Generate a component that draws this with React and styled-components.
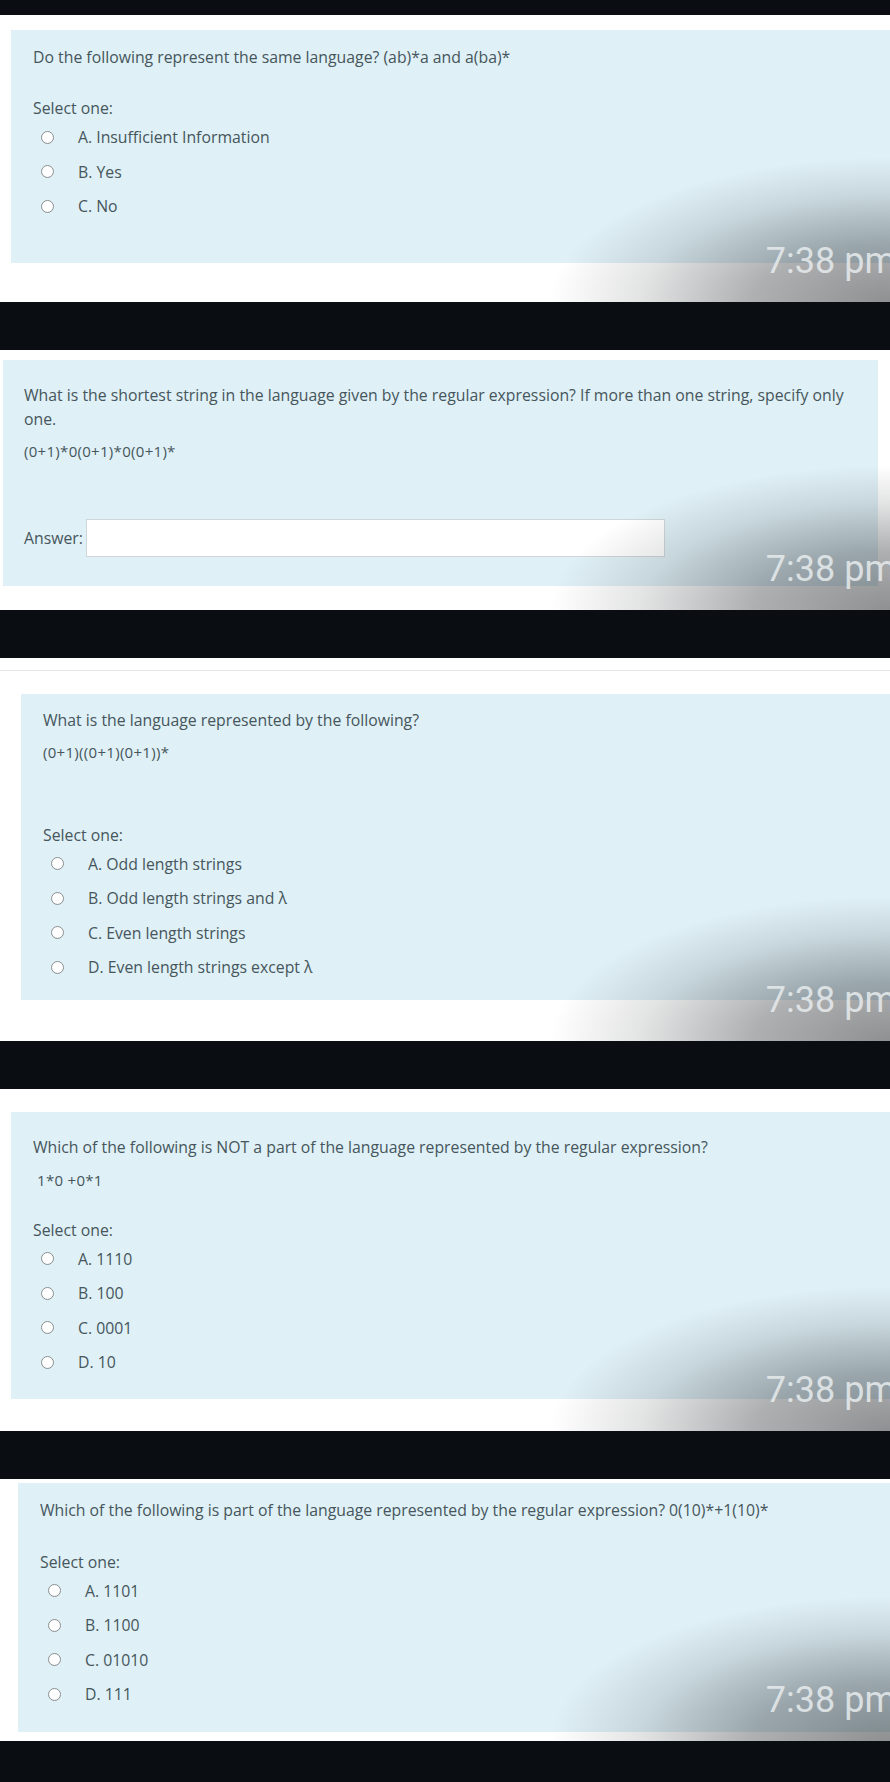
import styled, { createGlobalStyle } from "styled-components";

const GlobalStyle = createGlobalStyle`
  html, body {
    margin: 0;
    padding: 0;
    background: #0a0e12;
  }
  * {
    box-sizing: border-box;
  }
`;

const Feed = styled.div`
  display: flex;
  flex-direction: column;
  gap: 48px;
  padding: 15px 0 41px;
  font-family: "Open Sans", "Noto Sans", sans-serif;
`;

const Shot = styled.div`
  position: relative;
  overflow: hidden;
  background: #ffffff;
  display: flex;
  flex-direction: column;
  padding: ${(p) => p.$top}px ${(p) => p.$right || 0}px ${(p) => p.$bottom}px
    ${(p) => p.$left}px;
`;

const Rule = styled.div`
  height: 1px;
  background: #e4e6e8;
  margin: 12px -${(p) => p.$left}px 23px;
`;

const Card = styled.div`
  background: #dff0f6;
  color: #46565c;
  padding: ${(p) => p.$top}px 0 ${(p) => p.$bottom}px ${(p) => p.$inset || 22}px;
`;

const Question = styled.p`
  margin: 0;
  font-size: 15.8px;
  line-height: 24px;
`;

const Formula = styled.p`
  margin: ${(p) => p.$gap}px 0 0;
  padding-left: ${(p) => p.$indent || 0}px;
  font-size: 15px;
  line-height: 24px;
  letter-spacing: 0.3px;
`;

const Prompt = styled.p`
  margin: ${(p) => p.$gap}px 0 0;
  font-size: 15.8px;
  line-height: 24px;
`;

const Options = styled.div`
  display: flex;
  flex-direction: column;
`;

const Option = styled.label`
  display: flex;
  align-items: center;
  gap: 24px;
  height: 34.5px;
  padding-left: 8px;
  font-size: 15.8px;
`;

const Radio = styled.span`
  width: 13px;
  height: 13px;
  border-radius: 50%;
  border: 1px solid #8c9092;
  background: radial-gradient(circle at 50% 40%, #ffffff 55%, #eceeee 100%);
  flex: none;
`;

const AnswerRow = styled.div`
  display: flex;
  align-items: center;
  gap: 3px;
  margin-top: ${(p) => p.$gap}px;
  font-size: 15.8px;
`;

const Field = styled.div`
  width: 579px;
  height: 38px;
  background: #ffffff;
  border: 1px solid #cfd6d9;
`;

const Stamp = styled.div`
  position: absolute;
  right: 0;
  bottom: 0;
  width: 360px;
  height: 150px;
  pointer-events: none;
  background: radial-gradient(
    ellipse 340px 145px at 100% 100%,
    rgba(30, 34, 38, 0.5) 0%,
    rgba(30, 34, 38, 0.36) 40%,
    rgba(30, 34, 38, 0.12) 74%,
    rgba(30, 34, 38, 0) 100%
  );
`;

const Time = styled.span`
  position: absolute;
  right: -6px;
  bottom: 23px;
  font-family: Roboto, "Liberation Sans", sans-serif;
  font-size: 36px;
  line-height: 36px;
  font-weight: 400;
  color: rgba(232, 236, 238, 0.85);
  white-space: nowrap;
`;

const TimeStamp = () => (
  <Stamp>
    <Time>7:38 pm</Time>
  </Stamp>
);

const Choices = ({ items }) => (
  <Options>
    {items.map((item) => (
      <Option key={item}>
        <Radio />
        {item}
      </Option>
    ))}
  </Options>
);

export default function App() {
  return (
    <>
      <GlobalStyle />
      <Feed>
        <Shot $top={15} $left={11} $bottom={39}>
          <Card $top={15} $bottom={39}>
            <Question>
              Do the following represent the same language? (ab)*a and a(ba)*
            </Question>
            <Prompt $gap={27}>Select one:</Prompt>
            <Choices
              items={["A. Insufficient Information", "B. Yes", "C. No"]}
            />
          </Card>
          <TimeStamp />
        </Shot>

        <Shot $top={10} $left={3} $right={12} $bottom={24}>
          <Card $top={23} $bottom={29} $inset={21}>
            <Question>
              What is the shortest string in the language given by the regular
              expression? If more than one string, specify only
              <br />
              one.
            </Question>
            <Formula $gap={8}>(0+1)*0(0+1)*0(0+1)*</Formula>
            <AnswerRow $gap={56}>
              Answer:
              <Field />
            </AnswerRow>
          </Card>
          <TimeStamp />
        </Shot>

        <Shot $top={0} $left={21} $bottom={41}>
          <Rule $left={21} />
          <Card $top={14} $bottom={15}>
            <Question>What is the language represented by the following?</Question>
            <Formula $gap={8}>(0+1)((0+1)(0+1))*</Formula>
            <Prompt $gap={59}>Select one:</Prompt>
            <Choices
              items={[
                "A. Odd length strings",
                "B. Odd length strings and λ",
                "C. Even length strings",
                "D. Even length strings except λ",
              ]}
            />
          </Card>
          <TimeStamp />
        </Shot>

        <Shot $top={23} $left={11} $bottom={32}>
          <Card $top={23} $bottom={19}>
            <Question>
              Which of the following is NOT a part of the language represented
              by the regular expression?
            </Question>
            <Formula $gap={9} $indent={4}>
              1*0 +0*1
            </Formula>
            <Prompt $gap={26}>Select one:</Prompt>
            <Choices items={["A. 1110", "B. 100", "C. 0001", "D. 10"]} />
          </Card>
          <TimeStamp />
        </Shot>

        <Shot $top={4} $left={18} $bottom={9}>
          <Card $top={15} $bottom={20}>
            <Question>
              Which of the following is part of the language represented by the
              regular expression? 0(10)*+1(10)*
            </Question>
            <Prompt $gap={28}>Select one:</Prompt>
            <Choices items={["A. 1101", "B. 1100", "C. 01010", "D. 111"]} />
          </Card>
          <TimeStamp />
        </Shot>
      </Feed>
    </>
  );
}
